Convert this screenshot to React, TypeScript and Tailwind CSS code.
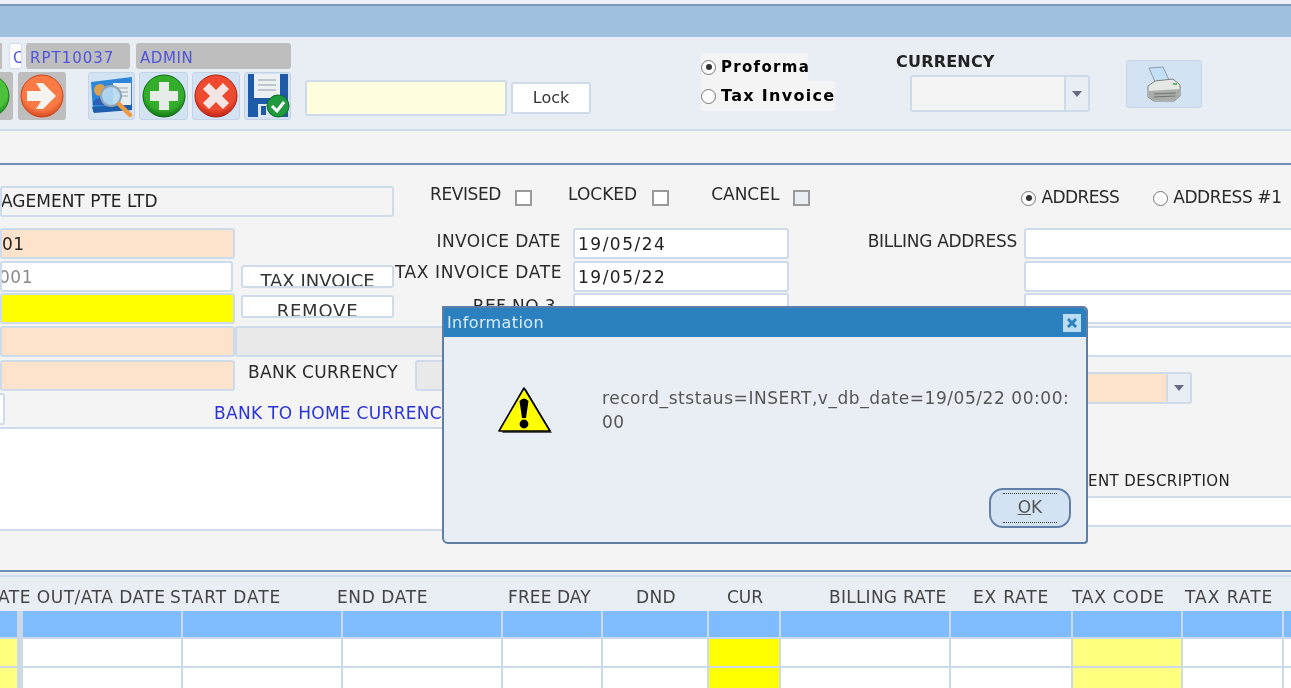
import type { ReactNode } from "react";

const field = "h-[31px] rounded-[3px] border-2 border-[#cddbea] text-[17px] overflow-hidden whitespace-nowrap";
const label = "text-[17px] text-[#2a2a2a] whitespace-nowrap";
const toolBtn = "h-[48px] rounded-[3px] border border-[#c3d4e7] bg-[#d3e3f3] flex items-center justify-center";
const smallBtn = "ml-[6px] h-[23px] w-[153px] overflow-hidden rounded-[3px] border-2 border-[#cddbea] bg-white text-center text-[18px] leading-[28px] text-[#333]";

const Ball = ({ id, from, to, children }: { id: string; from: string; to: string; children: ReactNode }) => (
  <svg width="44" height="44" viewBox="0 0 44 44">
    <defs>
      <radialGradient id={id} cx="50%" cy="35%" r="68%">
        <stop offset="0%" stopColor={from} />
        <stop offset="70%" stopColor={from} />
        <stop offset="100%" stopColor={to} />
      </radialGradient>
    </defs>
    <circle cx="22" cy="22" r="21" fill={`url(#${id})`} stroke={to} />
    {children}
  </svg>
);

const SearchCard = () => (
  <svg width="44" height="44" viewBox="0 0 44 44">
    <path d="M1 8 L42 3 V36 L3 38 Z" fill="#2f86d8" />
    <path d="M2 33 L42 30 V36 L4 39 Z" fill="#1d5fae" />
    <rect x="23" y="9" width="18" height="22" fill="#e8edf2" />
    <path d="M26 14h12M26 18h12M30 22h8" stroke="#9aa4ae" />
    <circle cx="10" cy="16" r="6" fill="#d9a24a" />
    <path d="M3 31 C3 22 15 22 16 31 Z" fill="#2a5fb8" />
    <circle cx="21" cy="22" r="10" fill="#b9daf2" fillOpacity="0.9" stroke="#8fa6b8" strokeWidth="2" />
    <path d="M29 30 L40 41" stroke="#ee9a3e" strokeWidth="4.5" strokeLinecap="round" />
  </svg>
);

const SaveDisk = () => (
  <svg width="44" height="46" viewBox="0 0 44 46">
    <path d="M2 1 H42 V44 H2 Z" fill="#1f5aa8" />
    <rect x="8" y="1" width="26" height="24" fill="#eef1f4" />
    <path d="M12 7h18M12 12h18M12 17h18" stroke="#bfc6cd" strokeWidth="2" />
    <rect x="12" y="31" width="20" height="13" fill="#dfe7ef" />
    <rect x="15" y="33" width="5" height="9" fill="#1f5aa8" />
    <circle cx="32" cy="33" r="11" fill="#1f9a3c" stroke="#0f6d28" />
    <path d="M26 33 L31 38 L38 29" fill="none" stroke="#fff" strokeWidth="3" />
  </svg>
);

const Printer = () => (
  <svg width="36" height="36" viewBox="0 0 36 36">
    <path d="M3 2 L17 1 L24 16 L10 18 Z" fill="#c4e0f6" stroke="#8e9ca8" />
    <path d="M2 20 L9 15 L27 13 L34 19 V30 L28 35 H8 L2 31 Z" fill="#e6e8e5" stroke="#7c807c" />
    <path d="M2.5 25 L34 23 V30 L28 34.5 H8 L2.5 31 Z" fill="#a9aca9" />
    <path d="M8 28 L30 27 M8 31 L29 30" fill="none" stroke="#6f726f" />
    <rect x="27" y="17" width="4" height="2" fill="#5fbf5f" />
  </svg>
);

const WarnIcon = () => (
  <svg width="56" height="50" viewBox="0 0 56 50">
    <path d="M29 3 L55 47 H5 Z" fill="#555" />
    <path d="M27 2 L53 45 H2 Z" fill="#ffff00" stroke="#000" strokeWidth="1.6" strokeLinejoin="round" />
    <path d="M22.5 15 Q27 10 31.5 15 L29 32 H25 Z" fill="#000" />
    <circle cx="27" cy="38" r="4.4" fill="#000" />
  </svg>
);

const Radio = ({ on }: { on?: boolean }) => (
  <span className="inline-flex h-[15px] w-[15px] shrink-0 items-center justify-center rounded-full border border-[#777] bg-white">
    {on && <span className="h-[6px] w-[6px] rounded-full bg-[#333]" />}
  </span>
);

const Check = ({ tint }: { tint?: boolean }) => (
  <span className={`block h-[16px] w-[17px] border-2 border-[#9a9a9a] ${tint ? "bg-[#e9eef5]" : "bg-white"}`} />
);

const Arrow = () => <span className="h-0 w-0 border-x-[5px] border-t-[6px] border-x-transparent border-t-[#666a80]" />;

const cols = [
  { w: "w-[19px]", cell: "bg-[#ffff80]" },
  { w: "w-[4px]", cell: "bg-[#cbd9e9]" },
  { w: "w-[160px]", cell: "bg-white" },
  { w: "w-[160px]", cell: "bg-white" },
  { w: "w-[160px]", cell: "bg-white" },
  { w: "w-[100px]", cell: "bg-white" },
  { w: "w-[106px]", cell: "bg-white" },
  { w: "w-[72px]", cell: "bg-[#ffff00]" },
  { w: "w-[170px]", cell: "bg-white" },
  { w: "w-[122px]", cell: "bg-white" },
  { w: "w-[110px]", cell: "bg-[#ffff80]" },
  { w: "w-[101px]", cell: "bg-white" },
  { w: "w-[20px]", cell: "bg-white" },
];

const heads = [
  { t: "ATE OUT/ATA DATE", c: "w-[170px] tracking-[0.5px] -indent-[2px]" },
  { t: "START DATE", c: "w-[167px] tracking-[0.9px]" },
  { t: "END DATE", c: "w-[171px] tracking-[0.6px]" },
  { t: "FREE DAY", c: "w-[128px] tracking-[0.1px]" },
  { t: "DND", c: "w-[91px] tracking-[0.3px]" },
  { t: "CUR", c: "w-[102px]" },
  { t: "BILLING RATE", c: "w-[144px] tracking-[0.25px]" },
  { t: "EX RATE", c: "w-[99px] tracking-[0.8px]" },
  { t: "TAX CODE", c: "w-[113px] tracking-[0.75px]" },
  { t: "TAX RATE", c: "w-[100px] tracking-[1px]" },
];

export default function App() {
  return (
    <div className="relative h-[688px] w-[1291px] overflow-hidden bg-[#f4f4f4] font-['DejaVu_Sans',sans-serif] text-[#222] blur-[0.35px]">
      <div className="h-[4px] bg-[#eef1f6]" />
      <div className="h-[33px] border-t-2 border-[#7e98b8] bg-[#9fc0de]" />

      {/* toolbar */}
      <div className="flex h-[94px] items-start border-b-2 border-[#cfdcea] bg-[#e9eef5]">
        <div className="w-[291px] pt-[6px]">
          <div className="flex h-[26px] text-[15px] text-[#4f55dd]">
            <div className="w-[2px] bg-[#bebebe]" />
            <div className="ml-[7px] w-[13px] overflow-hidden rounded-[3px] border border-[#d3dcea] bg-white pl-[3px] leading-[28px]">C</div>
            <div className="ml-[4px] w-[104px] rounded-[3px] bg-[#bebebe] pl-[4px] leading-[30px] tracking-[1px]">RPT10037</div>
            <div className="ml-[6px] w-[155px] rounded-[3px] bg-[#bebebe] pl-[4px] leading-[30px] tracking-[0.6px]">ADMIN</div>
          </div>
          <div className="mt-[3px] flex">
            <div className="flex h-[48px] w-[13px] items-center justify-end overflow-hidden rounded-r-[3px] bg-[#bebebe] pr-[3px]">
              <div className="shrink-0">
                <Ball id="g0" from="#4cc13a" to="#0f7d16">
                  <path d="M33 22 L24 15 V29 Z" fill="#e8e8e8" />
                </Ball>
              </div>
            </div>
            <div className="ml-[5px] flex h-[48px] w-[48px] items-center justify-center rounded-[3px] bg-[#bebebe]">
              <Ball id="o0" from="#f97a45" to="#d0401a">
                <path d="M7 17 H21 L16 9 H23 L36 22 L23 35 H16 L21 27 H7 Z" fill="#f7f3ee" />
              </Ball>
            </div>
            <div className={`ml-[22px] w-[47px] ${toolBtn}`}><SearchCard /></div>
            <div className={`ml-[4px] w-[49px] ${toolBtn}`}>
              <Ball id="g1" from="#34ad2c" to="#0c6c12">
                <path d="M17 8 H27 V17 H36 V27 H27 V36 H17 V27 H8 V17 H17 Z" fill="#e8ece8" />
              </Ball>
            </div>
            <div className={`ml-[4px] w-[48px] ${toolBtn}`}>
              <Ball id="r1" from="#ee4a30" to="#b81e10">
                <path d="M15 9 L22 16 L29 9 L35 15 L28 22 L35 29 L29 35 L22 28 L15 35 L9 29 L16 22 L9 15 Z" fill="#f3e6e2" />
              </Ball>
            </div>
            <div className={`ml-[4px] w-[47px] ${toolBtn}`}><SaveDisk /></div>
          </div>
        </div>
        <div className="ml-[14px] mt-[43px] h-[36px] w-[202px] rounded-[3px] border-2 border-[#cddbea] bg-[#ffffe0]" />
        <button className="ml-[4px] mt-[45px] h-[32px] w-[80px] rounded-[3px] border-2 border-[#cddbea] bg-white text-[16px] text-[#333]">Lock</button>
        <div className="ml-[110px] mt-[16px] font-bold text-black">
          <div className="flex h-[28px] w-[107px] items-center gap-[5px] bg-[#f4f4f4] text-[15px] tracking-[1.3px] whitespace-nowrap"><Radio on />Proforma</div>
          <div className="flex h-[30px] w-[134px] items-center gap-[5px] bg-[#f4f4f4] text-[16px] tracking-[1.3px] whitespace-nowrap"><Radio />Tax Invoice</div>
        </div>
        <div className="ml-[61px] mt-[15px] text-[16px] font-bold leading-[20px] tracking-[0.2px] text-[#222]">
          <div className="whitespace-nowrap">CURRENCY</div>
          <div className="ml-[14px] mt-[3px] flex h-[37px] w-[180px] rounded-[3px] border-2 border-[#cddbea] bg-[#f4f4f4]">
            <div className="flex-1" />
            <div className="flex w-[24px] items-center justify-center border-l-2 border-[#cddbea] bg-[#e9eef5]"><Arrow /></div>
          </div>
        </div>
        <div className={`ml-[36px] mt-[23px] w-[76px] ${toolBtn}`}><Printer /></div>
      </div>

      <div className="h-[34px] border-b-2 border-[#6f8fb3]" />

      {/* form */}
      <div className="flex h-[63px] pt-[21px]">
        <div className={`${field} w-[394px] leading-[27px] indent-[-1px]`}>AGEMENT PTE LTD</div>
        <div className={`${label} ml-[36px] mt-[-1px] flex h-[20px] items-center tracking-[-0.4px]`}>REVISED <span className="ml-[14px] mt-[6px]"><Check /></span></div>
        <div className={`${label} ml-[36px] mt-[-1px] flex h-[20px] items-center`}>LOCKED <span className="ml-[15px] mt-[6px]"><Check /></span></div>
        <div className={`${label} ml-[42px] mt-[-1px] flex h-[20px] items-center`}>CANCEL <span className="ml-[14px] mt-[6px]"><Check tint /></span></div>
        <div className={`${label} ml-[211px] mt-[2px] flex h-[20px] items-center gap-[5px] tracking-[-0.6px]`}><Radio on />ADDRESS</div>
        <div className={`${label} ml-[34px] mt-[2px] flex h-[20px] items-center gap-[5px] tracking-[-0.4px]`}><Radio />ADDRESS #1</div>
      </div>

      <div className="grid grid-cols-[235px_159px_179px_216px_235px_1fr] grid-rows-[33px_32px_33px_34px_33px] items-start">
        <div className={`${field} w-[235px] bg-[#fde3cb] leading-[29px] tracking-[0.5px]`}>01</div>
        <div />
        <div className={`${label} pr-[12px] pt-[1px] text-right tracking-[0.4px]`}>INVOICE DATE</div>
        <div className={`${field} bg-white pl-[3px] leading-[28px] tracking-[1.5px]`}>19/05/24</div>
        <div className={`${label} pr-[7px] pt-[1px] text-right tracking-[-0.3px]`}>BILLING ADDRESS</div>
        <div className={`${field} mr-[-6px] bg-white`} />

        <div className={`${field} w-[233px] bg-white indent-[-3px] leading-[29px] tracking-[0.5px] text-[#8a8a8a]`}>001</div>
        <div className={`${smallBtn} mt-[4px]`}>TAX INVOICE</div>
        <div className={`${label} mt-[-1px] pr-[11px] text-right tracking-[0.6px]`}>TAX INVOICE DATE</div>
        <div className={`${field} bg-white pl-[3px] leading-[28px] tracking-[1.5px]`}>19/05/22</div>
        <div />
        <div className={`${field} mr-[-6px] bg-white`} />

        <div className={`${field} w-[235px] bg-[#ffff00]`} />
        <div className={`${smallBtn} mt-[2px] tracking-[0.8px]`}>REMOVE</div>
        <div className={`${label} pr-[17px] pt-[1px] text-right tracking-[0.4px]`}>REF NO 3</div>
        <div className={`${field} bg-white`} />
        <div />
        <div className={`${field} mr-[-6px] bg-white`} />

        <div className={`${field} w-[235px] bg-[#fde3cb]`} />
        <div className={`${field} col-span-2 bg-[#e9e9e9]`} />
        <div />
        <div />
        <div className={`${field} mr-[-6px] h-[30px] bg-white`} />

        <div className={`${field} w-[235px] bg-[#fde3cb]`} />
        <div className={`${label} pl-[13px] tracking-[0.3px]`}>BANK CURRENCY</div>
        <div className={`${field} ml-[21px] w-[160px] bg-[#e9e9e9]`} />
        <div />
        <div />
        <div className="relative">
          <div className="absolute left-[-30px] top-[12px] flex h-[32px] w-[198px] rounded-[3px] border-2 border-[#cddbea] bg-[#fde3cb]">
            <div className="flex-1" />
            <div className="flex w-[24px] items-center justify-center border-l-2 border-[#cddbea] bg-[#e9eef5]"><Arrow /></div>
          </div>
        </div>
      </div>

      <div className="flex h-[34px]">
        <div className="h-[32px] w-[5px] rounded-r-[3px] border-2 border-l-0 border-[#cddbea] bg-white" />
        <div className="ml-[209px] mt-[8px] text-[17px] tracking-[0.3px] whitespace-nowrap text-[#2a35d8]">BANK TO HOME CURRENC</div>
      </div>

      <div className="flex h-[104px]">
        <div className="w-[800px] border-y-2 border-[#cddbea] bg-white" />
        <div className="flex-1 pt-[45px]">
          <div className="pl-[288px] text-[15px] leading-[18px] tracking-[0.4px] whitespace-nowrap text-[#222]">ENT DESCRIPTION</div>
          <div className="mt-[6px] h-[31px] border-y-2 border-[#cddbea] bg-white" />
        </div>
      </div>

      <div className="h-[41px] border-b-2 border-[#6f8fb3]" />
      <div className="h-[5px] border-b-2 border-[#cddbea] bg-[#e9eef5]" />

      {/* grid */}
      <div className="flex h-[34px] items-center bg-[#e9eef5] pt-[7px] text-[17px] text-[#444]">
        {heads.map((h) => (
          <div key={h.t} className={`${h.c} shrink-0 whitespace-nowrap`}>{h.t}</div>
        ))}
      </div>
      <div className="flex h-[26px] bg-[#cbd9e9]">
        {cols.map((c, i) => (
          <div key={i} className={`${c.w} shrink-0 border-r-2 border-[#cbd9e9] ${i === 1 ? "bg-[#cbd9e9]" : "bg-[#7fbcff]"}`} />
        ))}
      </div>
      {[0, 1].map((row) => (
        <div key={row} className="flex h-[29px] border-t-2 border-[#cbd9e9]">
          {cols.map((c, i) => (
            <div key={i} className={`${c.w} ${c.cell} shrink-0 border-r-2 border-[#cbd9e9]`} />
          ))}
        </div>
      ))}

      {/* message dialog */}
      <div className="absolute left-[442px] top-[306px] flex h-[238px] w-[646px] flex-col overflow-hidden rounded-tr-[5px] rounded-bl-[6px] rounded-br-[4px] border-2 border-[#5d7ea6] bg-[#e9eef5]">
        <div className="flex h-[29px] shrink-0 items-center justify-between bg-[#2b80bf] pl-[3px] pr-[5px] text-[16px] tracking-[0.4px] text-[#d9ecfa]">
          Information
          <span className="flex h-[18px] w-[18px] items-center justify-center bg-[#bcdcf2]">
            <svg width="12" height="12" viewBox="0 0 12 12"><path d="M2 2 L10 10 M10 2 L2 10" stroke="#2b80bf" strokeWidth="3" /></svg>
          </span>
        </div>
        <div className="flex flex-1">
          <div className="ml-[53px] mt-[49px]"><WarnIcon /></div>
          <div className="ml-[49px] mt-[49px] flex flex-1 flex-col pr-[14px]">
            <div className="h-[102px] text-[17px] leading-[24px] tracking-[0.55px] whitespace-nowrap text-[#555]">
              record_ststaus=INSERT,v_db_date=19/05/22 00:00:<br />00
            </div>
            <div className="flex justify-end pr-[1px]">
              <div className="flex h-[40px] w-[82px] items-center justify-center rounded-[14px] border-2 border-[#6080a8] bg-[#d3e3f3] text-[17px] text-[#555]">
                <span className="flex h-[30px] w-[54px] items-center justify-center border-y border-dotted border-[#444]"><span className="underline">O</span>K</span>
              </div>
            </div>
          </div>
        </div>
      </div>
    </div>
  );
}
